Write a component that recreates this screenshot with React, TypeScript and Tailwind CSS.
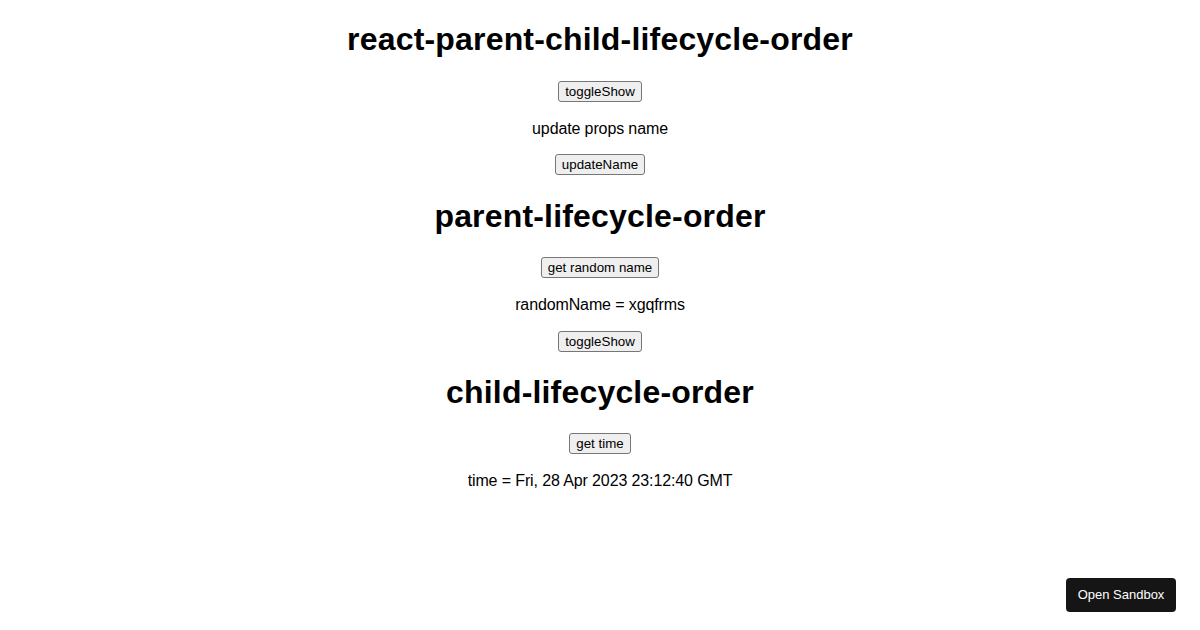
import React from "react";

function NativeButton({ children }: { children: React.ReactNode }) {
  return (
    <div className="flex h-[23px] justify-center pt-[1px]">
      <button className="h-[21px] rounded-[3px] border border-[#767676] bg-[#efefef] px-[6px] text-[13.33px] leading-[15px] text-black">
        {children}
      </button>
    </div>
  );
}

function Heading({ children }: { children: React.ReactNode }) {
  return (
    <h1 className="my-[21.44px] text-[32px] font-bold leading-[37px] tracking-[0.18px] text-black">
      {children}
    </h1>
  );
}

function Line({ children }: { children: React.ReactNode }) {
  return (
    <p className="mt-[17px] mb-[15px] text-base leading-[18.4px] tracking-[-0.12px] text-black">
      {children}
    </p>
  );
}

export default function App() {
  return (
    <div className="relative h-[630px] w-full overflow-hidden bg-white font-['Liberation_Sans',Arial,sans-serif]">
      <div className="text-center">
        <Heading>react-parent-child-lifecycle-order</Heading>
        <NativeButton>toggleShow</NativeButton>
        <Line>update props name</Line>
        <NativeButton>updateName</NativeButton>

        <Heading>parent-lifecycle-order</Heading>
        <NativeButton>get random name</NativeButton>
        <Line>randomName = xgqfrms</Line>
        <NativeButton>toggleShow</NativeButton>

        <Heading>child-lifecycle-order</Heading>
        <NativeButton>get time</NativeButton>
        <Line>time = Fri, 28 Apr 2023 23:12:40 GMT</Line>
      </div>

      {/* floating sandbox link */}
      <button className="absolute bottom-[18px] right-[24px] flex h-[34px] w-[110px] items-center justify-center rounded-[4px] bg-[#151515] text-[13px] text-white">
        Open Sandbox
      </button>
    </div>
  );
}
